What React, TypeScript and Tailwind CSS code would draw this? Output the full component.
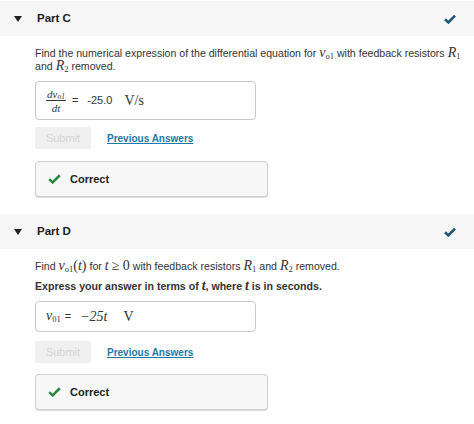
import React from "react";

const serif = { fontFamily: '"Liberation Serif", "DejaVu Serif", serif' };

const Var = ({ children }: { children: React.ReactNode }) => (
  <span className="italic text-[14px] leading-[10px]" style={serif}>
    {children}
  </span>
);

const Sub = ({ children }: { children: React.ReactNode }) => (
  <span className="not-italic text-[8.5px] leading-none align-baseline relative top-[1.5px]">{children}</span>
);

const Header = ({ title }: { title: string }) => (
  <div className="h-[35px] bg-[#f6f6f6] flex items-center pl-[14px] pr-[18px]">
    <svg width="8" height="6" viewBox="0 0 8 6" className="mr-[15px]">
      <path d="M0 0 H8 L4 6 Z" fill="#222" />
    </svg>
    <span className="font-bold text-[11.5px] text-[#222]">{title}</span>
    <svg width="12" height="10" viewBox="0 0 12 10" className="ml-auto">
      <path d="M1 5.2 L4.4 8.4 L11 1.6" stroke="#1d5577" strokeWidth="2.6" fill="none" />
    </svg>
  </div>
);

const Actions = () => (
  <div className="flex items-center gap-[16px]">
    <button className="w-[56px] h-[22px] bg-[#f0f0f0] text-[#d4d4d4] text-[11px] rounded-[2px]">
      Submit
    </button>
    <a className="text-[#1b7aa6] font-bold text-[10px] underline">Previous Answers</a>
  </div>
);

const Correct = () => (
  <div className="w-[233px] h-[36px] bg-[#f7f7f7] border border-[#cfcfcf] rounded-[4px] shadow-[0_1px_1px_rgba(0,0,0,0.15)] flex items-center pl-[12px]">
    <svg width="13" height="10" viewBox="0 0 14 11" className="mr-[9px]">
      <path d="M1.2 5.6 L5 9.2 L12.8 1.4" stroke="#2a8a3e" strokeWidth="2.8" fill="none" />
    </svg>
    <span className="font-bold text-[11px] text-[#222]">Correct</span>
  </div>
);

export default function App() {
  return (
    <div
      className="w-[474px] h-[424px] bg-white text-[#333] overflow-hidden pt-[1px]"
      style={{ fontFamily: '"Liberation Sans", Arial, sans-serif' }}
    >
      <Header title="Part C" />
      <div className="pl-[35px] pr-[6px]">
        <p className="mt-[11px] text-[10.6px] leading-[13px]">
          Find the numerical expression of the differential equation for{" "}
          <Var>
            v<Sub>o1</Sub>
          </Var>{" "}
          with feedback resistors{" "}
          <Var>
            R<Sub>1</Sub>
          </Var>{" "}
          and{" "}
          <Var>
            R<Sub>2</Sub>
          </Var>{" "}
          removed.
        </p>
        <div className="mt-[8px] w-[221px] h-[39px] border border-[#c8c8c8] rounded-[4px] flex items-center pl-[10px] text-[11px]">
          <span className="inline-flex flex-col items-center italic text-[11px] leading-[12px]" style={serif}>
            <span className="border-b border-[#333] px-[1px]">
              dv<sub className="text-[7.5px] leading-none">o1</sub>
            </span>
            <span className="pt-[1px]">dt</span>
          </span>
          <span className="ml-[6px]">=</span>
          <span className="ml-[9px]">-25.0</span>
          <span className="ml-[12px] text-[14px]" style={serif}>
            V/s
          </span>
        </div>
        <div className="mt-[7px]">
          <Actions />
        </div>
        <div className="mt-[12px]">
          <Correct />
        </div>
      </div>

      <div className="mt-[17px]">
        <Header title="Part D" />
      </div>
      <div className="pl-[35px] pr-[6px]">
        <p className="mt-[10px] text-[10.6px] leading-[14px]">
          Find{" "}
          <Var>
            v<Sub>o1</Sub>
          </Var>
          <span className="text-[14px] leading-[10px]" style={serif}>
            (<i>t</i>)
          </span>{" "}
          for <Var>t</Var>{" "}
          <span className="text-[14px] leading-[10px]" style={serif}>
            ≥ 0
          </span>{" "}
          with feedback resistors{" "}
          <Var>
            R<Sub>1</Sub>
          </Var>{" "}
          and{" "}
          <Var>
            R<Sub>2</Sub>
          </Var>{" "}
          removed.
        </p>
        <p className="mt-[6px] text-[10.6px] leading-[14px] font-bold">
          Express your answer in terms of <Var>t</Var>, where <Var>t</Var> is in seconds.
        </p>
        <div className="mt-[8px] w-[221px] h-[31px] border border-[#c8c8c8] rounded-[4px] flex items-center pl-[10px] text-[11px]">
          <Var>
            v<Sub>01</Sub>
          </Var>
          <span className="ml-[4px]">=</span>
          <span className="ml-[9px] text-[14px] italic" style={serif}>
            −25t
          </span>
          <span className="ml-[16px] text-[14px]" style={serif}>
            V
          </span>
        </div>
        <div className="mt-[9px]">
          <Actions />
        </div>
        <div className="mt-[11px]">
          <Correct />
        </div>
      </div>
    </div>
  );
}
